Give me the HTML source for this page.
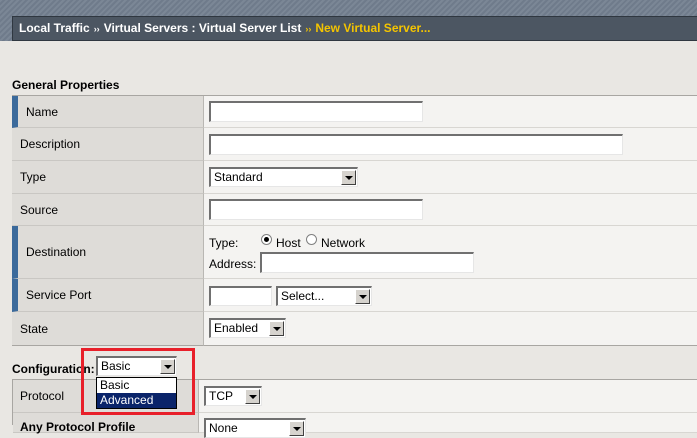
<!DOCTYPE html>
<html><head><style>
*{margin:0;padding:0;box-sizing:border-box}
body{width:697px;height:425px;overflow:hidden;background:#e9e7e3;font-family:"Liberation Sans",Arial,sans-serif;font-size:12px;color:#000;position:relative}
.top{position:absolute;left:0;top:0;width:697px;height:41px;background:repeating-linear-gradient(135deg,#7b8796 0 2px,#6f7b8b 2px 4px)}
.crumb{position:absolute;left:12px;top:16px;width:690px;height:25px;background:#4c5662;border:1px solid #2f3740;color:#fff;font-weight:bold;font-size:12px;line-height:23px;padding-left:6px;white-space:nowrap}
.crumb .y{color:#f4c400}
.crumb .s{font-size:9px;margin:0 4px}
.a{position:absolute}
.h{font-weight:bold;font-size:12px}
.lab{position:absolute;background:#dedcd8;border-bottom:1px solid #c9c7c3;border-right:1px solid #b9b7b3;padding-left:8px;display:flex;align-items:center}
.val{position:absolute;background:#f4f3f1;border-bottom:1px solid #d8d6d2}
.bar{border-left:6px solid #3b6a9b;padding-left:8px}
.inp{position:absolute;background:#fff;border-top:2px solid #707070;border-left:2px solid #707070;border-right:1px solid #e6e6e6;border-bottom:1px solid #e6e6e6}
.sel{position:absolute;background:#fff;border-top:2px solid #707070;border-left:2px solid #707070;border-right:1px solid #e6e6e6;border-bottom:1px solid #e6e6e6;line-height:17px;padding-left:3px;font-size:12px}
.sel .b{position:absolute;right:1px;top:1px;width:15px;height:15px;background:#d6d3ce;border:1px solid;border-color:#fff #404040 #404040 #fff}
.sel .b:after{content:"";position:absolute;left:3px;top:5px;border-left:4px solid transparent;border-right:4px solid transparent;border-top:4px solid #000}
</style></head><body>
<div class="top"></div>
<div class="crumb">Local Traffic<span class="s">››</span>Virtual Servers : Virtual Server List<span class="s y">››</span><span class="y">New Virtual Server...</span></div>
<div class="a h" style="left:12px;top:78px">General Properties</div>
<div class="a" style="left:12px;top:95px;width:685px;height:1px;background:#a8a6a2"></div>
<div class="a" style="left:12px;top:95px;width:1px;height:250px;background:#a8a6a2"></div>

<div class="lab bar" style="left:12px;top:96px;width:192px;height:32px">Name</div>
<div class="val" style="left:204px;top:96px;width:493px;height:32px"></div>
<div class="lab" style="left:12px;top:128px;width:192px;height:33px">Description</div>
<div class="val" style="left:204px;top:128px;width:493px;height:33px"></div>
<div class="lab" style="left:12px;top:161px;width:192px;height:33px">Type</div>
<div class="val" style="left:204px;top:161px;width:493px;height:33px"></div>
<div class="lab" style="left:12px;top:194px;width:192px;height:32px">Source</div>
<div class="val" style="left:204px;top:194px;width:493px;height:32px"></div>
<div class="lab bar" style="left:12px;top:226px;width:192px;height:53px">Destination</div>
<div class="val" style="left:204px;top:226px;width:493px;height:53px"></div>
<div class="lab bar" style="left:12px;top:279px;width:192px;height:33px">Service Port</div>
<div class="val" style="left:204px;top:279px;width:493px;height:33px"></div>
<div class="lab" style="left:12px;top:312px;width:192px;height:34px;border-bottom:1px solid #a8a6a2">State</div>
<div class="val" style="left:204px;top:312px;width:493px;height:34px;border-bottom:1px solid #a8a6a2"></div>

<div class="inp" style="left:209px;top:101px;width:214px;height:21px"></div>
<div class="inp" style="left:209px;top:134px;width:414px;height:21px"></div>
<div class="sel" style="left:209px;top:167px;width:149px;height:20px">Standard<span class="b"></span></div>
<div class="inp" style="left:209px;top:199px;width:214px;height:21px"></div>
<div class="a" style="left:209px;top:236px">Type:</div>
<div class="a" style="left:261px;top:234px;width:11px;height:11px;border-radius:50%;background:#fff;border:1px solid #808080"><div style="width:5px;height:5px;border-radius:50%;background:#000;margin:2px"></div></div>
<div class="a" style="left:276px;top:236px">Host</div>
<div class="a" style="left:306px;top:234px;width:11px;height:11px;border-radius:50%;background:#fff;border:1px solid #808080"></div>
<div class="a" style="left:321px;top:236px">Network</div>
<div class="a" style="left:209px;top:257px">Address:</div>
<div class="inp" style="left:260px;top:252px;width:214px;height:21px"></div>
<div class="inp" style="left:209px;top:286px;width:63px;height:20px"></div>
<div class="sel" style="left:276px;top:286px;width:96px;height:20px">Select...<span class="b"></span></div>
<div class="sel" style="left:209px;top:318px;width:77px;height:20px">Enabled<span class="b"></span></div>

<div class="a h" style="left:12px;top:362px">Configuration:</div>
<div class="a" style="left:12px;top:379px;width:685px;height:1px;background:#a8a6a2"></div>
<div class="a" style="left:12px;top:379px;width:1px;height:46px;background:#a8a6a2"></div>
<div class="lab" style="left:13px;top:380px;width:186px;height:33px;padding-left:7px">Protocol</div>
<div class="val" style="left:199px;top:380px;width:498px;height:33px"></div>
<div class="lab" style="left:13px;top:413px;width:186px;height:20px;padding-left:7px;align-items:flex-start;padding-top:7px;font-weight:bold">Any Protocol Profile</div>
<div class="val" style="left:199px;top:413px;width:498px;height:20px"></div>
<div class="sel" style="left:204px;top:386px;width:58px;height:20px">TCP<span class="b"></span></div>
<div class="sel" style="left:204px;top:418px;width:102px;height:20px">None<span class="b"></span></div>

<div class="sel" style="left:96px;top:356px;width:81px;height:20px">Basic<span class="b"></span></div>
<div class="a" style="left:96px;top:377px;width:81px;height:32px;background:#fff;border:1px solid #000">
<div style="height:15px;line-height:14px;padding-left:3px">Basic</div>
<div style="height:15px;line-height:15px;padding-left:3px;background:#0a246a;color:#fff">Advanced</div></div>
<div class="a" style="left:81px;top:348px;width:114px;height:67px;border:3px solid #e8202a"></div>
</body></html>
